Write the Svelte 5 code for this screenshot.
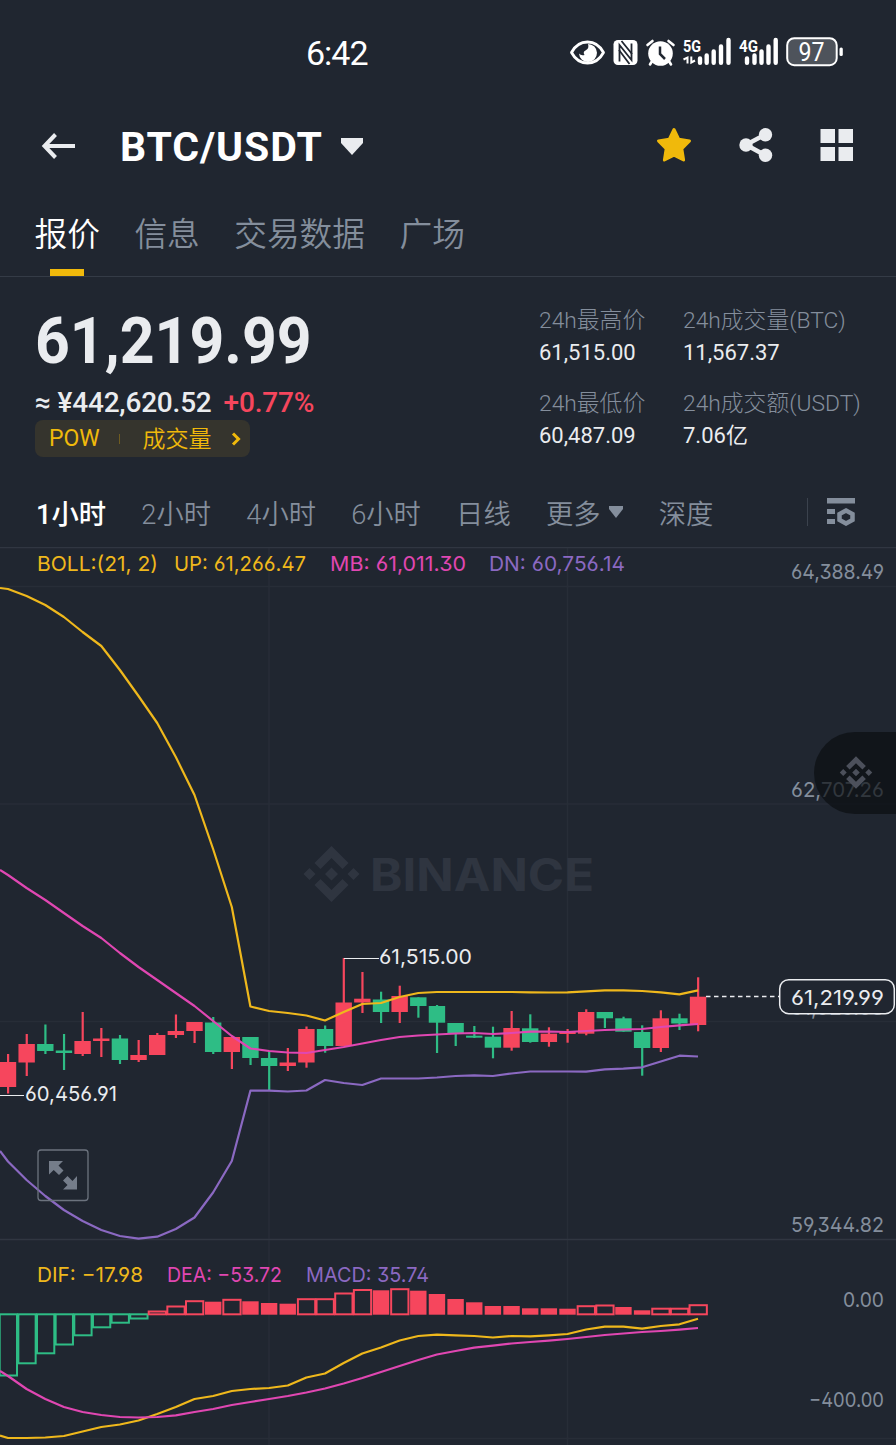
<script lang="ts">
  const tabs = ['报价', '信息', '交易数据', '广场'];
  const intervals = ['1小时', '2小时', '4小时', '6小时', '日线'];

  const stats = [
    { label: '24h最高价', value: '61,515.00' },
    { label: '24h成交量(BTC)', value: '11,567.37' },
    { label: '24h最低价', value: '60,487.09' },
    { label: '24h成交额(USDT)', value: '7.06亿' },
  ];

  const STEP = 18.65;
  const ZERO = 1314.3;
  const x = (i: number) => 8 + i * STEP;

  // wick top, wick bottom, body top, body bottom, rising
  const candles = [
    [1054, 1093.5, 1062, 1087, 1], [1034, 1076, 1044, 1062.5, 1], [1024.5, 1054, 1044, 1051, 0],
    [1034, 1070, 1050.5, 1053, 0], [1012, 1056, 1041, 1054, 1], [1028, 1057, 1038.5, 1041, 1],
    [1035, 1064, 1038.5, 1060, 0], [1040, 1062, 1055, 1060, 1], [1033, 1055, 1035, 1055, 1],
    [1014.5, 1038, 1031, 1035, 1], [1022, 1043, 1022, 1031, 1], [1017, 1054, 1022.5, 1052, 0],
    [1037, 1069, 1037, 1052, 1], [1037, 1065, 1037, 1058, 0], [1051, 1091, 1058, 1066, 0],
    [1048, 1071, 1062.5, 1066, 1], [1026.5, 1067.7, 1029, 1062.5, 1], [1025.5, 1052.7, 1029, 1046, 0],
    [958, 1046, 1002.5, 1046, 1], [972, 1013, 998.7, 1002.5, 1], [991.7, 1023, 999.5, 1012, 0],
    [985.7, 1023, 996, 1012, 1], [997.3, 1017.7, 997.3, 1006, 0], [1005, 1053, 1006, 1022.7, 0],
    [1023, 1046, 1023, 1034, 0], [1026, 1038, 1035.7, 1037.7, 0], [1026.7, 1058.3, 1036.7, 1047.7, 0],
    [1011, 1050.7, 1028, 1047.7, 1], [1014.3, 1042.7, 1028.3, 1042, 0], [1027.3, 1046.7, 1033.7, 1042, 1],
    [1029, 1042.7, 1031.7, 1034, 1], [1009.3, 1035.3, 1012, 1033.7, 1], [1012, 1028, 1012, 1018.3, 0],
    [1016.7, 1031.7, 1018.3, 1031.7, 0], [1025.3, 1075.7, 1032, 1048, 0], [1010.3, 1052, 1018.3, 1048, 1],
    [1013.7, 1030, 1018.3, 1023.5, 0], [977.3, 1031.3, 996.7, 1025, 1],
  ];

  const up = [589, 596, 605, 617, 632, 646, 670, 696, 723, 757, 795, 849, 907, 1006.5, 1011, 1013, 1015.5, 1020.5, 1012, 1004, 1003, 997, 993, 992, 992, 992, 992, 992, 992.3, 992.5, 992.3, 991.3, 990.3, 990.3, 991, 992.3, 994.3, 990.3];
  const mb = [875, 888, 900, 913, 926, 938, 953, 967, 980, 993, 1006, 1021, 1036, 1048.5, 1051, 1052.5, 1053, 1050, 1047, 1043.5, 1040, 1037, 1035.5, 1034.5, 1033.5, 1033, 1034, 1033, 1031.7, 1031.5, 1032, 1031, 1030, 1029.5, 1029, 1027, 1025.3, 1024];
  const dn = [1161.5, 1180, 1196, 1210, 1221, 1230, 1236, 1238.7, 1236.7, 1229, 1217.5, 1192.5, 1161, 1090.7, 1090.7, 1091.5, 1090.5, 1080, 1083, 1085, 1078.5, 1078.5, 1078.5, 1077.5, 1076, 1075.3, 1076, 1073.5, 1071.5, 1071.5, 1071.5, 1071.7, 1069.3, 1068.7, 1067.3, 1061.5, 1055.7, 1056.5];
  const dif = [1438, 1438, 1437.5, 1436, 1431.5, 1427, 1424.5, 1420.5, 1414, 1407, 1399, 1396, 1391, 1389, 1388, 1385.5, 1377.5, 1373.5, 1363, 1353.5, 1347.5, 1340.5, 1336, 1334.7, 1335.3, 1336, 1337.5, 1336, 1336.3, 1335.3, 1334, 1329.5, 1326.7, 1326.7, 1328.7, 1326, 1324.3, 1318.7];
  const dea = [1376, 1389, 1399, 1407, 1412, 1415, 1417, 1417.5, 1417, 1415.3, 1412, 1409, 1405, 1402, 1399, 1396, 1392.5, 1388.5, 1383.5, 1378, 1372, 1366, 1360, 1354.5, 1351, 1347.7, 1345.7, 1343.5, 1342, 1340.7, 1339, 1337, 1335, 1333.5, 1332, 1331, 1329.7, 1328];

  const lines = [
    { color: '#efb81c', start: 588, values: up },
    { color: '#e047b2', start: 870, values: mb },
    { color: '#8b69c2', start: 1151, values: dn },
    { color: '#efb81c', start: 1435.5, values: dif },
    { color: '#e047b2', start: 1371, values: dea },
  ];

  const points = (start: number, values: number[]) =>
    `0,${start} ` + values.map((v, i) => `${x(i).toFixed(1)},${v}`).join(' ');

  const negative = [1375.5, 1363.3, 1353.3, 1344.5, 1335.3, 1327.3, 1322.7, 1318.5];
  // bar top, hollow
  const positive = [
    [1311.5, 1], [1306.5, 1], [1301.2, 1], [1301.7, 0], [1299.8, 1], [1301.3, 0], [1303, 0], [1303.7, 0],
    [1299.2, 1], [1299.2, 1], [1293.5, 1], [1290, 1], [1290.3, 0], [1289.2, 1], [1290.7, 0], [1294, 0],
    [1299, 0], [1302.3, 0], [1306, 0], [1306, 0], [1308.3, 0], [1308.3, 0], [1308.7, 0], [1306.2, 1],
    [1305.5, 1], [1307, 0], [1310.3, 0], [1308.7, 1], [1308.7, 1], [1305.2, 1],
  ];

  const legend = [
    { text: 'BOLL:(21, 2)', x: 37, y: 571, w: 121, color: '#efb81c' },
    { text: 'UP: 61,266.47', x: 174, y: 571, w: 132, color: '#efb81c' },
    { text: 'MB: 61,011.30', x: 330, y: 571, w: 136, color: '#e047b2' },
    { text: 'DN: 60,756.14', x: 489, y: 571, w: 136, color: '#8b69c2' },
    { text: 'DIF: −17.98', x: 37, y: 1282, w: 106, color: '#efb81c' },
    { text: 'DEA: −53.72', x: 167, y: 1282, w: 115, color: '#e047b2' },
    { text: 'MACD: 35.74', x: 306, y: 1282, w: 123, color: '#8b69c2' },
  ];

  const axis = [
    { text: '64,388.49', y: 579, w: 93 },
    { text: '62,707.26', y: 797, w: 93 },
    { text: '61,026.03', y: 1015, w: 93 },
    { text: '59,344.82', y: 1232, w: 93 },
    { text: '0.00', y: 1307, w: 41 },
    { text: '−400.00', y: 1407, w: 75 },
  ];
</script>

{#snippet diamond()}
  <path d="M-17-11 0-28 17-11 11-5 0-16-11-5ZM-17 11 0 28 17 11 11 5 0 16-11 5ZM0-6.5 6.5 0 0 6.5-6.5 0ZM-22-6-16 0-22 6-28 0ZM22-6 28 0 22 6 16 0Z" />
{/snippet}

<div class="screen">
  <div class="status">
    <span class="clock">6:42</span>
    <svg class="status-icons" width="276" height="36" viewBox="568 34 276 36">
      <path d="M571.500 52.500C579 38.500 596 38.500 603.500 52.500C596 66.500 579 66.500 571.500 52.500Z" fill="none" stroke="#fff" stroke-width="2.800" stroke-linejoin="round" />
      <path d="M588 44A9 9 0 1 1 579 53.500Q581 56 584.500 55Q582.500 52 585.500 50.500Q589.500 48.500 588 44Z" fill="#fff" />
      <rect x="613.500" y="40" width="24" height="25" rx="4.500" fill="#fff" />
      <path d="M619.500 61.500V45L631.500 60V43.500" fill="none" stroke="#202630" stroke-width="1.800" />
      <path d="M621.500 41 632 54M619 50 629.500 64" fill="none" stroke="#202630" stroke-width="1.800" />
      <circle cx="660.500" cy="53.500" r="12.300" fill="#fff" />
      <path d="M660 46.500V54L665 59" fill="none" stroke="#202630" stroke-width="2.500" />
      <path d="M647.500 45 652.500 41M673.500 45 668.500 41M651.500 62 650 64.500M669.500 62 671 64.500" stroke="#fff" stroke-width="2.600" stroke-linecap="round" />
      <text class="net" x="683" y="52" textLength="18" lengthAdjust="spacingAndGlyphs">5G</text>
      <text class="net" x="739" y="52" textLength="19" lengthAdjust="spacingAndGlyphs">4G</text>
      <path d="M683.500 59.500 687.500 57.500V63.500M691.300 56.500V62.500L695 60.500" fill="none" stroke="#fff" stroke-width="2" />
      <path d="M700 58.500V62.800M706.700 55.500V62.800M713.700 51.500V62.800M721 46.500V62.800M728.500 40V62.800M747 58.500V62.800M754.500 55.500V62.800M761.500 51.500V62.800M768.500 46.500V62.800M775.700 40V62.800" stroke="#fff" stroke-width="4.400" stroke-linecap="round" />
      <rect x="787.200" y="38.200" width="49.500" height="27" rx="7" fill="#4e535b" stroke="#fff" stroke-width="2" />
      <rect x="839.500" y="47.500" width="3.300" height="8.500" rx="1.500" fill="#fff" />
      <text class="battery" x="798.500" y="60.700" textLength="26" lengthAdjust="spacingAndGlyphs">97</text>
    </svg>
  </div>

  <header class="header">
    <svg class="back" width="36" height="28" viewBox="0 0 36 28">
      <path d="M14.500 2.500 3.500 14 14.500 25.500M3.500 14H34" fill="none" stroke="#eaecef" stroke-width="4" />
    </svg>
    <h1 class="pair">BTC/USDT</h1>
    <svg class="caret" width="22" height="17" viewBox="0 0 22 17"><path d="M0 0H22V5L11 17 0 5Z" fill="#eaecef" /></svg>
    <div class="header-actions">
      <svg width="36" height="36" viewBox="0 0 36 36">
        <path d="M18 2.500 22.800 12.300 33.500 13.900 25.800 21.700 27.600 33 18 28.200 8.400 33 10.200 21.700 2.500 13.900 13.200 12.300Z" fill="#f0b90b" stroke="#f0b90b" stroke-width="3" stroke-linejoin="round" />
      </svg>
      <svg width="34" height="36" viewBox="0 0 34 36">
        <path d="M26.500 7.500 7 17.700 26.500 28.500" fill="none" stroke="#eaecef" stroke-width="4.500" />
        <circle cx="26.500" cy="7.700" r="6.700" fill="#eaecef" />
        <circle cx="7" cy="18" r="6.700" fill="#eaecef" />
        <circle cx="26.500" cy="28.300" r="6.700" fill="#eaecef" />
      </svg>
      <svg width="34" height="34" viewBox="0 0 34 34">
        <path d="M.500 1H15V15H.500ZM18.500 1H33V15H18.500ZM.500 19H15V33H.500ZM18.500 19H33V33H18.500Z" fill="#eaecef" />
      </svg>
    </div>
  </header>

  <nav class="tabs">
    {#each tabs as tab, i}
      <span class="tab" class:active={i === 0}>{tab}</span>
    {/each}
  </nav>

  <section class="quote">
    <div class="price-col">
      <div class="price">61,219.99</div>
      <div class="fiat">
        <span>≈ ¥442,620.52</span>
        <span class="change">+0.77%</span>
      </div>
      <div class="tags">
        <span class="pow">POW</span>
        <i></i>
        <span class="volume">成交量</span>
        <svg width="10" height="14" viewBox="0 0 10 14"><path d="M2 1.500 7.500 7 2 12.500" fill="none" stroke="#f0b90b" stroke-width="3" /></svg>
      </div>
    </div>
    <div class="stats">
      {#each stats as stat}
        <div class="stat">
          <span class="stat-label">{stat.label}</span>
          <span class="stat-value">{stat.value}</span>
        </div>
      {/each}
    </div>
  </section>

  <nav class="intervals">
    {#each intervals as interval, i}
      <span class:active={i === 0}>{interval}</span>
    {/each}
    <span class="more">更多<svg width="14" height="12" viewBox="0 0 14 12"><path d="M0 0H14V3L7 12 0 3Z" fill="#848e9c" /></svg></span>
    <span>深度</span>
    <div class="settings">
      <svg width="28" height="28" viewBox="0 0 28 28">
        <path d="M0 0H28V5.500H0ZM0 11H8V16H0ZM0 21H8V26H0Z" fill="#848e9c" />
        <path d="M19 12.500 25.500 16V22L19 25.500 12.500 22V16Z" fill="none" stroke="#848e9c" stroke-width="4.500" />
      </svg>
    </div>
  </nav>

  <svg class="chart" width="896" height="898" viewBox="0 547 896 898">
    <g stroke="#272d37" stroke-width="1.500">
      <path d="M269 547V1445M567.500 547V1445M0 586.500H896M0 804H896M0 1021.500H896M0 1438.500H896" />
      <path class="divider" d="M0 547.500H896M0 1239.500H896" />
    </g>

    <g fill="#2f3540">
      <g transform="translate(331.500 874)">{@render diamond()}</g>
      <text class="watermark" x="370" y="891" textLength="224" lengthAdjust="spacingAndGlyphs">BINANCE</text>
    </g>

    {#each candles as [high, low, top, bottom, rising], i}
      <g class={rising ? 'rise' : 'fall'}>
        <rect x={x(i) - 1} y={high} width="2.200" height={low - high} />
        <rect x={x(i) - 8.2} y={top} width="16.400" height={bottom - top} />
      </g>
    {/each}

    {#each negative as bottom, i}
      <rect class="hollow-fall" x={x(i) - 8.3} y={ZERO} width="17.300" height={bottom - ZERO} />
    {/each}
    {#each positive as [top, hollow], i}
      {#if hollow}
        <rect class="hollow-rise" x={x(i + 8) - 8.5} y={top} width="17.300" height={ZERO - top} />
      {:else}
        <rect class="rise" x={x(i + 8) - 8.2} y={top} width="16.400" height={1314.7 - top} />
      {/if}
    {/each}

    {#each lines as line}
      <polyline points={points(line.start, line.values)} fill="none" stroke={line.color} stroke-width="2.200" stroke-linejoin="round" />
    {/each}

    {#each legend as item}
      <text x={item.x} y={item.y} textLength={item.w} lengthAdjust="spacingAndGlyphs" fill={item.color}>{item.text}</text>
    {/each}
    {#each axis as item}
      <text class="axis" x={884 - item.w} y={item.y} textLength={item.w} lengthAdjust="spacingAndGlyphs">{item.text}</text>
    {/each}

    <path d="M344 958.500H379M0 1095.500H24" stroke="#eaecef" stroke-width="1.200" />
    <text class="mark" x="379" y="964" textLength="93" lengthAdjust="spacingAndGlyphs">61,515.00</text>
    <text class="mark" x="25" y="1101" textLength="92" lengthAdjust="spacingAndGlyphs">60,456.91</text>

    <path d="M706 996.500H779" stroke="#eaecef" stroke-width="1.400" stroke-dasharray="4.500 3.500" />
    <rect x="779.700" y="979.700" width="114.600" height="34" rx="9" fill="#202630" stroke="#eaecef" stroke-width="1.500" />
    <text class="mark" x="791" y="1005" textLength="93" lengthAdjust="spacingAndGlyphs">61,219.99</text>

    <rect x="38" y="1150" width="50" height="50.500" rx="3" fill="none" stroke="#6c737e" stroke-width="1.300" />
    <path d="M49 1161H63L58.500 1165.500 63.500 1170.500 59 1175 53.700 1170 49 1174.500ZM77 1189.500H63L67.500 1185 63 1180.500 67.500 1176 72.500 1181 77 1176Z" fill="#757d8a" />

    <path d="M896 732H855A41 41 0 0 0 855 814H896Z" fill="#0b0d10" fill-opacity=".68" />
    <g transform="translate(856 772.500) scale(.58)" fill="#4c505b">{@render diamond()}</g>
  </svg>
</div>

<style>
  :global(body) {
    background: #202630;
  }

  .screen {
    width: 896px;
    height: 1445px;
    overflow: hidden;
    background: #202630;
    color: #eaecef;
    font-family: Roboto, 'Noto Sans CJK SC', sans-serif;
  }

  .status {
    display: flex;
    align-items: center;
    justify-content: space-between;
    height: 104px;
    padding: 0 52px 0 306px;
    box-sizing: border-box;
  }

  .clock {
    font-size: 34px;
    color: #fff;
    letter-spacing: -1px;
    padding-top: 2px;
  }

  .net {
    font-size: 16px;
    font-weight: 700;
    fill: #fff;
  }

  .battery {
    font-size: 25px;
    font-weight: 400;
    fill: #fff;
  }

  .header {
    display: flex;
    align-items: center;
    height: 84px;
    padding: 0 42px 0 41px;
    box-sizing: border-box;
  }

  .pair {
    margin: 1px 0 0 43px;
    width: 221px;
    font-size: 41px;
    font-weight: 700;
    line-height: 48px;
    letter-spacing: 0.9px;
    color: #fff;
  }

  .header-actions {
    display: flex;
    align-items: center;
    gap: 47px;
    margin-left: auto;
    padding-bottom: 2px;
  }

  .tabs {
    display: flex;
    gap: 34.5px;
    height: 89px;
    padding: 0 34.5px;
    box-sizing: border-box;
    border-bottom: 1px solid #343b46;
  }

  .tab {
    display: flex;
    flex-direction: column;
    align-items: center;
    justify-content: space-between;
    padding-top: 23px;
    font-size: 32.7px;
    line-height: 48px;
    font-weight: 350;
    color: #848e9c;
  }

  .tab.active {
    color: #fff;
  }

  .tab.active::after {
    content: '';
    width: 34px;
    height: 7px;
    background: #f0b90b;
  }

  .quote {
    display: flex;
    height: 203px;
    padding-left: 35px;
    box-sizing: border-box;
  }

  .price-col {
    width: 504px;
    padding-top: 28px;
  }

  .price {
    font-size: 65px;
    font-weight: 700;
    line-height: 72px;
    transform: scaleX(0.935);
    transform-origin: left;
  }

  .fiat {
    display: flex;
    gap: 12px;
    margin-top: 9px;
    font-size: 28px;
    line-height: 34px;
    font-weight: 500;
    letter-spacing: -0.2px;
  }

  .change {
    color: #f6465d;
  }

  .tags {
    display: flex;
    align-items: center;
    width: 215px;
    height: 37px;
    padding: 0 9px 0 14px;
    box-sizing: border-box;
    border-radius: 8px;
    background: #35342d;
    color: #f0b90b;
    font-size: 23px;
    justify-content: space-between;
  }

  .tags i {
    width: 1px;
    height: 10px;
    background: #6f5c20;
  }

  .volume {
    margin-left: 3px;
    padding-bottom: 3px;
    font-weight: 350;
  }

  .stats {
    display: grid;
    grid-template-columns: 144px 190px;
    grid-auto-rows: 83px;
    padding-top: 28px;
  }

  .stat {
    display: flex;
    flex-direction: column;
    white-space: nowrap;
  }

  .stat-label {
    font-size: 22.8px;
    line-height: 32px;
    font-weight: 300;
    color: #848e9c;
  }

  .stat-value {
    font-size: 22px;
    line-height: 32px;
  }

  .intervals {
    display: flex;
    align-items: center;
    gap: 35.2px;
    height: 67px;
    padding: 0 41px 4px 36px;
    box-sizing: border-box;
    font-size: 27.3px;
    font-weight: 350;
    color: #848e9c;
  }

  .intervals .active {
    color: #fff;
    font-weight: 500;
  }

  .more {
    display: flex;
    align-items: center;
    gap: 9px;
  }

  .settings {
    display: flex;
    margin-left: auto;
    padding-left: 19px;
    border-left: 1px solid #3b424d;
  }

  .chart {
    display: block;
  }

  .chart text {
    font-family: Inter, 'Open Sans', sans-serif;
    font-feature-settings: 'ss01';
    font-size: 20.5px;
  }

  .chart .divider {
    stroke: #303641;
  }

  .chart .axis {
    fill: #848e9c;
  }

  .chart .mark {
    fill: #eaecef;
  }

  .chart .watermark {
    font-size: 45px;
    font-weight: 700;
  }

  .rise {
    fill: #f6465d;
  }

  .fall {
    fill: #2ebd85;
  }

  .hollow-rise {
    fill: none;
    stroke: #f6465d;
    stroke-width: 2;
  }

  .hollow-fall {
    fill: none;
    stroke: #2ebd85;
    stroke-width: 2;
  }
</style>
